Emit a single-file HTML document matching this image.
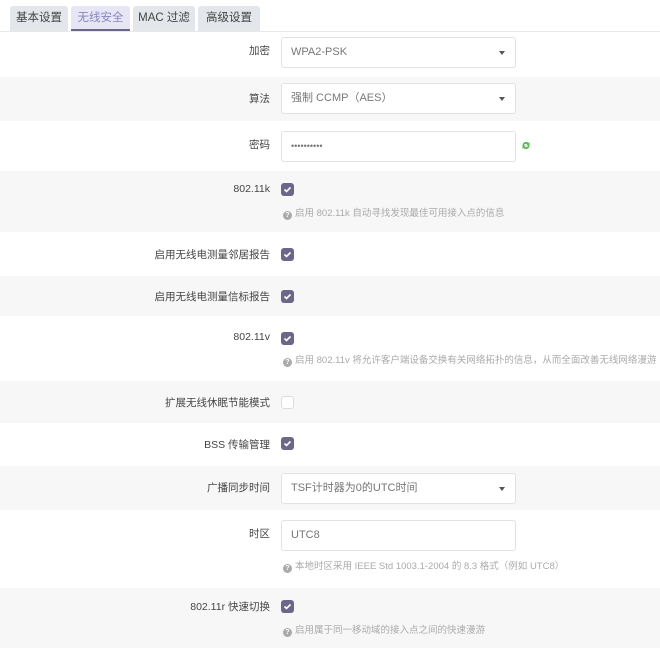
<!DOCTYPE html>
<html><head><meta charset="utf-8"><style>
*{margin:0;padding:0;box-sizing:border-box}
body{width:660px;height:648px;overflow:hidden;background:#fff;font-family:"Liberation Sans","Noto Sans CJK SC",sans-serif;font-size:11px;color:#555;position:relative}
.tab{position:absolute;top:6px;height:25px;background:#e3e6ea;border-radius:3px 3px 0 0;text-align:center;line-height:25px;font-size:11.5px;color:#444}
.tab.act{background:#e6e6f7;color:#8a86b8;border-bottom:2px solid #6c6689}
.line{position:absolute;top:31px;left:0;width:660px;height:1px;background:#e8e8e8}
.row{position:absolute;left:0;width:660px}
.g{background:#f7f7f7}
.lbl{position:absolute;right:390px;text-align:right;color:#444;font-size:10.5px;white-space:nowrap}
.ctl{position:absolute;left:281px;width:235px;height:31px;border:1px solid #e2e2e2;border-radius:3px;background:#fff;padding-left:9px;line-height:29px;color:#777;font-size:11px}
.arr{position:absolute;right:10px;top:13px;width:0;height:0;border-left:3px solid transparent;border-right:3px solid transparent;border-top:4px solid #555}
.cb{position:absolute;left:281px;width:13px;height:13px;border-radius:3px;background:#6c6689}
.cb svg{position:absolute;left:2px;top:2px}
.cb.off{background:#fff;border:1px solid #ddd}
.help{position:absolute;left:283px;color:#aaa;font-size:9.5px;white-space:nowrap;line-height:12px}
.q{display:inline-block;width:9px;height:9px;border-radius:50%;background:#aaa;color:#fff;font-size:7px;line-height:9px;text-align:center;font-weight:bold;margin-right:3px;vertical-align:-1px}
</style></head><body>
<div class="tab" style="left:10px;width:58px">基本设置</div>
<div class="tab act" style="left:71px;width:59px">无线安全</div>
<div class="tab" style="left:133px;width:62px">MAC 过滤</div>
<div class="tab" style="left:198px;width:62px">高级设置</div>
<div class="line"></div>

<div class="lbl" style="top:43px">加密</div>
<div class="ctl" style="top:37px">WPA2-PSK<span class="arr"></span></div>

<div class="row g" style="top:77px;height:44px"></div>
<div class="lbl" style="top:91px">算法</div>
<div class="ctl" style="top:83px">强制 CCMP（AES）<span class="arr"></span></div>

<div class="lbl" style="top:137px">密码</div>
<div class="ctl" style="top:131px;font-size:9px;letter-spacing:0">••••••••••</div>
<svg style="position:absolute;left:521px;top:140px" width="10" height="11" viewBox="0 0 10 11"><path d="M1.5 5.5a3.5 3.5 0 0 1 6-2.5l1-1v3.5H5l1.2-1.2a2.2 2.2 0 0 0-3.4 1.2z M8.5 5.5a3.5 3.5 0 0 1-6 2.5l-1 1V5.5H5L3.8 6.7a2.2 2.2 0 0 0 3.4-1.2z" fill="#5cb85c"/></svg>

<div class="row g" style="top:171px;height:61px"></div>
<div class="lbl" style="top:183px">802.11k</div>
<div class="cb" style="top:183px"><svg width="9" height="9" viewBox="0 0 9 9"><path d="M1.5 4.5l2 2 4-4" stroke="#fff" stroke-width="1.6" fill="none"/></svg></div>
<div class="help" style="top:208px"><span class="q">?</span>启用 802.11k 自动寻找发现最佳可用接入点的信息</div>

<div class="lbl" style="top:247px">启用无线电测量邻居报告</div>
<div class="cb" style="top:248px"><svg width="9" height="9" viewBox="0 0 9 9"><path d="M1.5 4.5l2 2 4-4" stroke="#fff" stroke-width="1.6" fill="none"/></svg></div>

<div class="row g" style="top:276px;height:40px"></div>
<div class="lbl" style="top:289px">启用无线电测量信标报告</div>
<div class="cb" style="top:290px"><svg width="9" height="9" viewBox="0 0 9 9"><path d="M1.5 4.5l2 2 4-4" stroke="#fff" stroke-width="1.6" fill="none"/></svg></div>

<div class="lbl" style="top:331px">802.11v</div>
<div class="cb" style="top:332px"><svg width="9" height="9" viewBox="0 0 9 9"><path d="M1.5 4.5l2 2 4-4" stroke="#fff" stroke-width="1.6" fill="none"/></svg></div>
<div class="help" style="top:355px"><span class="q">?</span>启用 802.11v 将允许客户端设备交换有关网络拓扑的信息，从而全面改善无线网络漫游</div>

<div class="row g" style="top:381px;height:42px"></div>
<div class="lbl" style="top:395px">扩展无线休眠节能模式</div>
<div class="cb off" style="top:396px"></div>

<div class="lbl" style="top:437px">BSS 传输管理</div>
<div class="cb" style="top:437px"><svg width="9" height="9" viewBox="0 0 9 9"><path d="M1.5 4.5l2 2 4-4" stroke="#fff" stroke-width="1.6" fill="none"/></svg></div>

<div class="row g" style="top:466px;height:44px"></div>
<div class="lbl" style="top:480px">广播同步时间</div>
<div class="ctl" style="top:473px">TSF计时器为0的UTC时间<span class="arr"></span></div>

<div class="lbl" style="top:526px">时区</div>
<div class="ctl" style="top:520px">UTC8</div>
<div class="help" style="top:561px"><span class="q">?</span>本地时区采用 IEEE Std 1003.1-2004 的 8.3 格式（例如 UTC8）</div>

<div class="row g" style="top:588px;height:60px"></div>
<div class="lbl" style="top:599px">802.11r 快速切换</div>
<div class="cb" style="top:600px"><svg width="9" height="9" viewBox="0 0 9 9"><path d="M1.5 4.5l2 2 4-4" stroke="#fff" stroke-width="1.6" fill="none"/></svg></div>
<div class="help" style="top:625px"><span class="q">?</span>启用属于同一移动域的接入点之间的快速漫游</div>
</body></html>
